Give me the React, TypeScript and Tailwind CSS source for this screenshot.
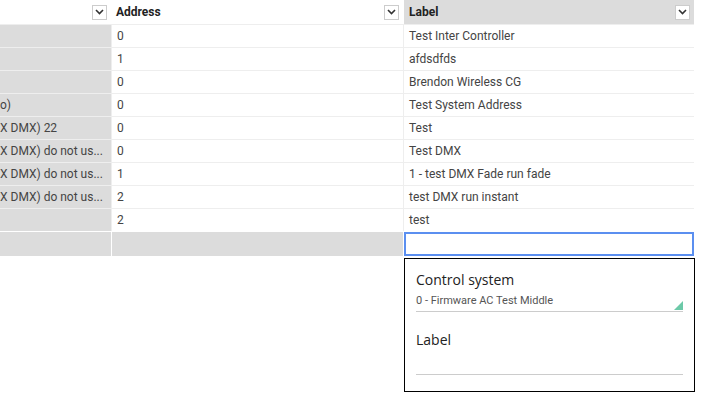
import React from "react";

const rows: [string, string, string][] = [
  ["", "0", "Test Inter Controller"],
  ["", "1", "afdsdfds"],
  ["", "0", "Brendon Wireless CG"],
  ["o)", "0", "Test System Address"],
  ["X DMX) 22", "0", "Test"],
  ["X DMX) do not us...", "0", "Test DMX"],
  ["X DMX) do not us...", "1", "1 - test DMX Fade run fade"],
  ["X DMX) do not us...", "2", "test DMX run instant"],
  ["", "2", "test"],
];

const Chev = () => (
  <span className="w-[15px] h-[15px] bg-white border border-[#ccc] flex items-center justify-center">
    <svg width="9" height="6" viewBox="0 0 9 6"><path d="M1 1l3.5 3.5L8 1" stroke="#333" strokeWidth="1.6" fill="none" /></svg>
  </span>
);

export default function App() {
  return (
    <div className="w-[702px] h-[410px] bg-white text-[12px] text-[#444] relative" style={{ fontFamily: "Roboto, sans-serif" }}>
      <div className="grid grid-cols-[111px_1px_291px_1px_290px] w-[694px]">
        <div className="h-[24px] flex items-center justify-end pr-[4px]"><Chev /></div>
        <div />
        <div className="h-[24px] flex items-center justify-between pl-[4px] pr-[4px] font-bold text-[#222]">Address<Chev /></div>
        <div />
        <div className="h-[24px] flex items-center justify-between pl-[5px] pr-[4px] font-bold text-[#222] bg-[#dcdcdc]">Label<Chev /></div>
        {rows.map((r, i) => (
          <React.Fragment key={i}>
            <div className="h-[23px] bg-[#dcdcdc] border-t border-[#eee] flex items-center whitespace-nowrap overflow-hidden">{r[0]}</div>
            <div className="bg-[#eee]" />
            <div className="h-[23px] border-t border-[#eee] flex items-center pl-[5px]">{r[1]}</div>
            <div className="bg-[#eee]" />
            <div className="h-[23px] border-t border-[#eee] flex items-center pl-[5px]">{r[2]}</div>
          </React.Fragment>
        ))}
        <div className="h-[24px] mt-[1px] bg-[#dcdcdc]" />
        <div className="bg-white" />
        <div className="h-[24px] mt-[1px] bg-[#dcdcdc]" />
        <div className="bg-white" />
        <div className="h-[24px] mt-[1px] border-2 border-[#5b8ff0]" />
      </div>
      <div className="absolute left-[404px] top-[258px] w-[291px] h-[134px] border border-black bg-white px-[11px] pt-[10px]" style={{ fontFamily: "'Open Sans', sans-serif" }}>
        <div className="text-[14px] text-[#222]">Control system</div>
        <div className="mt-[3px] border-b border-[#ccc] flex justify-between items-end pb-[1px] text-[11px] text-[#555]" style={{ fontFamily: "Roboto, sans-serif" }}>
          <span>0 - Firmware AC Test Middle</span>
          <svg width="9" height="9" viewBox="0 0 9 9"><path d="M9 0L9 9L0 9Z" fill="#6cc9a8" /></svg>
        </div>
        <div className="mt-[17px] text-[14px] text-[#222]">Label</div>
        <div className="mt-[24px] border-b border-[#ccc]" />
      </div>
    </div>
  );
}
